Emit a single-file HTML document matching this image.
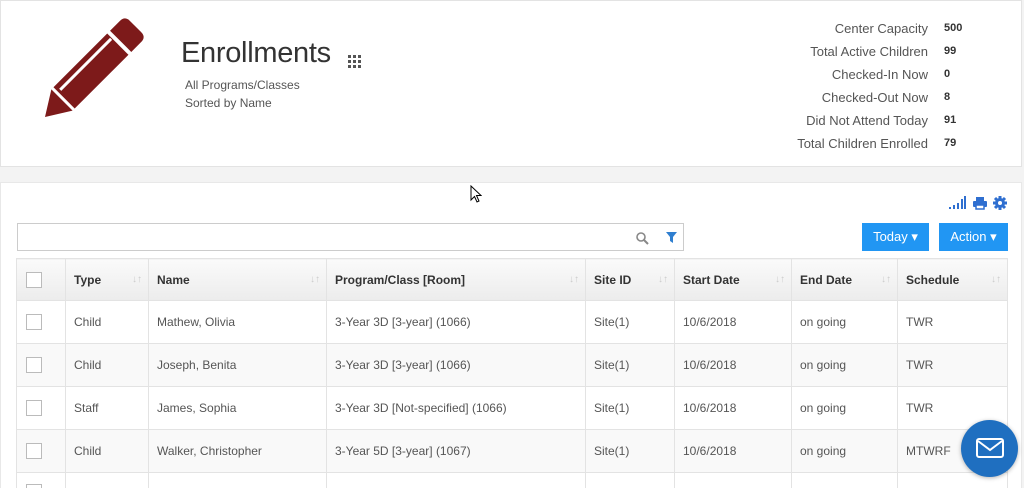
<!DOCTYPE html>
<html><head><style>
*{box-sizing:border-box;margin:0;padding:0}
html{width:1024px;height:488px;overflow:hidden}
body{width:1024px;height:488px;overflow:hidden;background:#f3f3f3;font-family:"Liberation Sans",sans-serif;color:#555;position:relative}
.top{position:absolute;left:0;top:0;width:1022px;height:167px;background:#fff;border:1px solid #e3e3e3}
.panel{position:absolute;left:0;top:182px;width:1022px;height:306px;background:#fff;border:1px solid #e8e8e8;border-bottom:none}
h1{position:absolute;left:180px;top:36px;font-weight:normal;font-size:29px;color:#333;letter-spacing:-0.3px}
.sub{position:absolute;left:184px;font-size:12px;color:#555}
.stats{position:absolute;right:93px;top:19px;text-align:right;font-size:13px;color:#555}
.stats div{height:23px;line-height:17px}
.vals{position:absolute;left:943px;top:19px;font-size:11px;font-weight:bold;color:#333}
.vals div{height:23px;line-height:17px}
.search{position:absolute;left:17px;top:223px;width:667px;height:28px;border:1px solid #ccc;background:#fff}
.btn{position:absolute;top:223px;height:28px;background:#2196f3;color:#fff;font-size:13px;line-height:28px;text-align:center}
table{position:absolute;left:16px;top:258px;border-collapse:collapse;font-size:12px}
td,th{border:1px solid #e3e3e3;padding:0 8px;text-align:left;height:43px}
th{height:42px;background:linear-gradient(#fafafa,#ececec);color:#333;font-size:12px;position:relative}
th .s{position:absolute;right:6px;top:15px;color:#ccc;font-size:10px;font-weight:normal}
tr:nth-child(odd) td{background:#f9f9f9}
tr.last td{height:15px;border-bottom:none;vertical-align:bottom}
.cb{width:16px;height:16px;border:1px solid #bbb;background:#fff;margin-left:1px}
</style></head><body>
<div class="top">
<svg style="position:absolute;left:0;top:0" width="170" height="140">
<g transform="translate(44,116) rotate(-45)" fill="#7d1a1a">
<path d="M0 0 L24 -15 L24 15Z"/>
<rect x="27" y="-15" width="76" height="30"/>
<path d="M107 -15 H121 Q128 -15 128 -8 V8 Q128 15 121 15 H107Z"/>
<rect x="30" y="-10" width="72" height="3" fill="#fff"/>
</g>
</svg>
<h1>Enrollments</h1>
<svg style="position:absolute;left:347px;top:54px" width="13" height="13"><g fill="#555"><rect x="0" y="0" width="3" height="3"/><rect x="5" y="0" width="3" height="3"/><rect x="10" y="0" width="3" height="3"/><rect x="0" y="5" width="3" height="3"/><rect x="5" y="5" width="3" height="3"/><rect x="10" y="5" width="3" height="3"/><rect x="0" y="10" width="3" height="3"/><rect x="5" y="10" width="3" height="3"/><rect x="10" y="10" width="3" height="3"/></g></svg>
<div class="sub" style="top:77px">All Programs/Classes</div>
<div class="sub" style="top:95px">Sorted by Name</div>
<div class="stats"><div>Center Capacity</div><div>Total Active Children</div><div>Checked-In Now</div><div>Checked-Out Now</div><div>Did Not Attend Today</div><div>Total Children Enrolled</div></div>
<div class="vals"><div>500</div><div>99</div><div>0</div><div>8</div><div>91</div><div>79</div></div>
</div>
<div class="panel"></div>
<svg style="position:absolute;left:949px;top:196px" width="60" height="14"><g fill="#2f6fd0"><rect x="0" y="11" width="2" height="2"/><rect x="4" y="9" width="2" height="4"/><rect x="8" y="7" width="2" height="6"/><rect x="12" y="3" width="2" height="10"/><rect x="15" y="0" width="2" height="13"/>
<rect x="27" y="1" width="8" height="4"/><rect x="24" y="5" width="14" height="6" rx="1"/><rect x="27" y="9" width="8" height="4" fill="#fff" stroke="#2f6fd0" stroke-width="1.5"/>
<circle cx="51" cy="7" r="5"/></g>
<g stroke="#2f6fd0" stroke-width="3"><line x1="51" y1="0" x2="51" y2="14"/><line x1="44" y1="7" x2="58" y2="7"/><line x1="46" y1="2" x2="56" y2="12"/><line x1="56" y1="2" x2="46" y2="12"/></g><circle cx="51" cy="7" r="2" fill="#fff"/></svg>
<div class="search"><svg style="position:absolute;left:618px;top:8px" width="13" height="13"><circle cx="5" cy="5" r="4" fill="none" stroke="#888" stroke-width="1.6"/><line x1="8" y1="8" x2="12" y2="12" stroke="#888" stroke-width="2"/></svg><svg style="position:absolute;left:648px;top:8px" width="11" height="11"><path d="M0 0H11L7 5V11L4 9V5Z" fill="#2f7fd0"/></svg></div>
<div class="btn" style="left:862px;width:67px">Today ▾</div>
<div class="btn" style="left:939px;width:69px">Action ▾</div>
<table>
<tr><th style="width:49px"><div class="cb"></div></th><th style="width:83px">Type<span class="s">↓↑</span></th><th style="width:178px">Name<span class="s">↓↑</span></th><th style="width:259px">Program/Class [Room]<span class="s">↓↑</span></th><th style="width:89px">Site ID<span class="s">↓↑</span></th><th style="width:117px">Start Date<span class="s">↓↑</span></th><th style="width:106px">End Date<span class="s">↓↑</span></th><th style="width:110px">Schedule<span class="s">↓↑</span></th></tr>
<tr><td><div class="cb"></div></td><td>Child</td><td>Mathew, Olivia</td><td>3-Year 3D [3-year] (1066)</td><td>Site(1)</td><td>10/6/2018</td><td>on going</td><td>TWR</td></tr>
<tr><td><div class="cb"></div></td><td>Child</td><td>Joseph, Benita</td><td>3-Year 3D [3-year] (1066)</td><td>Site(1)</td><td>10/6/2018</td><td>on going</td><td>TWR</td></tr>
<tr><td><div class="cb"></div></td><td>Staff</td><td>James, Sophia</td><td>3-Year 3D [Not-specified] (1066)</td><td>Site(1)</td><td>10/6/2018</td><td>on going</td><td>TWR</td></tr>
<tr><td><div class="cb"></div></td><td>Child</td><td>Walker, Christopher</td><td>3-Year 5D [3-year] (1067)</td><td>Site(1)</td><td>10/6/2018</td><td>on going</td><td>MTWRF</td></tr>
<tr class="last"><td><div class="cb" style="height:4px;border-bottom:none"></div></td><td></td><td></td><td></td><td></td><td></td><td></td><td></td></tr>
</table>
<div style="position:absolute;left:961px;top:420px;width:57px;height:57px;border-radius:50%;background:#1f6fc0;box-shadow:0 1px 4px rgba(0,0,0,.3)"><svg style="position:absolute;left:15px;top:18px" width="28" height="20"><rect x="1" y="1" width="26" height="18" rx="2" fill="none" stroke="#fff" stroke-width="2"/><path d="M2 3L14 12L26 3" fill="none" stroke="#fff" stroke-width="2"/></svg></div>
<svg style="position:absolute;left:470px;top:185px" width="12" height="19"><path d="M1 1V15L4.5 11.5L7 17L9 16L6.5 10.5H11Z" fill="#fff" stroke="#000"/></svg>
</body></html>
